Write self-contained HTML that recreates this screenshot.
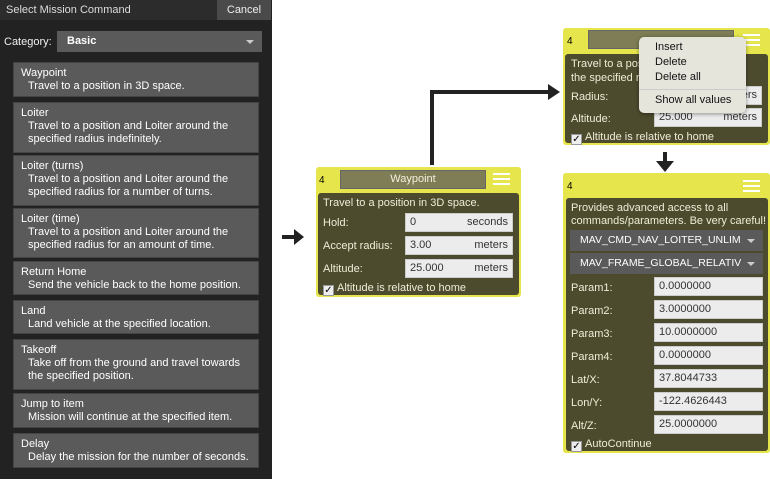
<!DOCTYPE html>
<html><head><style>
*{margin:0;padding:0;box-sizing:border-box}
body{width:770px;height:481px;background:#fff;position:relative;font-family:"Liberation Sans",sans-serif;font-size:11px;overflow:hidden}
.a{position:absolute}
.lp{left:0;top:0;width:272px;height:479px;background:#222}
.item{position:absolute;left:13px;width:246px;background:#5a5a5a;border:1px solid #444;color:#fff;padding:4px 0 0 7px;line-height:13px}
.item div{padding-left:7px}
.card{background:#e6e64c;border-radius:3px}
.in{background:#4c4b2e;border-radius:3px;color:#f2f2e0}
.fld{position:absolute;background:#ececec;border:1px solid #ccc;color:#333;height:19px;line-height:17px;padding:0 4px}
.fld span{float:right}
.lab{position:absolute;color:#eeeed8}
.ham{position:absolute;width:17px;height:2px;background:#fff;box-shadow:0 5px 0 #fff,0 10px 0 #fff}
.cb{display:inline-block;width:11px;height:11px;background:#eee;border:1px solid #999;vertical-align:-2px;margin-right:3px;font-size:10px;line-height:9px;color:#000;text-align:center}
.dd{position:absolute;background:#5a5a5a;color:#fff;height:21px;line-height:21px;padding-left:10px;white-space:nowrap}
.dd b{display:block;overflow:hidden;font-weight:normal;width:calc(100% - 22px)}
.dd:after{content:"";position:absolute;right:8px;top:9px;border:4px solid transparent;border-top-color:#ccc;border-bottom:0}
</style></head><body>
<div class="a lp"></div>
<div class="a" style="left:0;top:0;width:217px;height:20px;background:#2c2c2c;color:#ddd;line-height:20px;padding-left:6px">Select Mission Command</div>
<div class="a" style="left:217px;top:0;width:54px;height:20px;background:#4a4a4a;color:#eee;line-height:20px;text-align:center">Cancel</div>
<div class="a" style="left:4px;top:36px;color:#eee">Category:</div>
<div class="dd" style="left:57px;top:31px;width:205px;font-weight:bold">Basic</div>
<div class="item" style="top:62px;height:35px">Waypoint<div>Travel to a position in 3D space.</div></div>
<div class="item" style="top:102px;height:51px">Loiter<div>Travel to a position and Loiter around the<br>specified radius indefinitely.</div></div>
<div class="item" style="top:155px;height:51px">Loiter (turns)<div>Travel to a position and Loiter around the<br>specified radius for a number of turns.</div></div>
<div class="item" style="top:208px;height:50px">Loiter (time)<div>Travel to a position and Loiter around the<br>specified radius for an amount of time.</div></div>
<div class="item" style="top:261px;height:34px">Return Home<div>Send the vehicle back to the home position.</div></div>
<div class="item" style="top:300px;height:34px">Land<div>Land vehicle at the specified location.</div></div>
<div class="item" style="top:339px;height:51px">Takeoff<div>Take off from the ground and travel towards<br>the specified position.</div></div>
<div class="item" style="top:393px;height:35px">Jump to item<div>Mission will continue at the specified item.</div></div>
<div class="item" style="top:433px;height:35px">Delay<div>Delay the mission for the number of seconds.</div></div>

<svg class="a" style="left:0;top:0" width="770" height="481">
<g fill="#222">
<rect x="282" y="235" width="14" height="4"/><polygon points="294,229 304,237 294,245"/>
<rect x="430" y="90" width="4" height="75"/><rect x="430" y="90" width="120" height="4"/><polygon points="548,84 560,92 548,100"/>
<rect x="663" y="152" width="4" height="12"/><polygon points="656,161 665,172 674,161"/>
</g></svg>

<div class="a card" style="left:316px;top:167px;width:205px;height:130px"></div>
<div class="a" style="left:319px;top:175px;font-size:10px">4</div>
<div class="a" style="left:340px;top:170px;width:146px;height:19px;background:#7e7d55;border:1px solid #666;color:#f2f2e0;text-align:center;line-height:17px">Waypoint</div>
<div class="ham" style="left:493px;top:173px"></div>
<div class="a in" style="left:318px;top:193px;width:201px;height:102px"></div>
<div class="lab" style="left:323px;top:197px">Travel to a position in 3D space.</div>
<div class="lab" style="left:323px;top:217px">Hold:</div><div class="fld" style="left:405px;top:213px;width:108px">0<span>seconds</span></div>
<div class="lab" style="left:323px;top:240px">Accept radius:</div><div class="fld" style="left:405px;top:236px;width:108px">3.00<span>meters</span></div>
<div class="lab" style="left:323px;top:263px">Altitude:</div><div class="fld" style="left:405px;top:259px;width:108px">25.000<span>meters</span></div>
<div class="lab" style="left:323px;top:282px"><span class="cb">✓</span>Altitude is relative to home</div>

<div class="a card" style="left:563px;top:28px;width:207px;height:117px"></div>
<div class="a" style="left:567px;top:36px;font-size:10px">4</div>
<div class="a" style="left:588px;top:30px;width:146px;height:19px;background:#7e7d55;border:1px solid #666"></div>
<div class="ham" style="left:743px;top:34px"></div>
<div class="a in" style="left:565px;top:54px;width:203px;height:89px"></div>
<div class="lab" style="left:571px;top:57px;line-height:14px">Travel to a pos<br>the specified r</div>
<div class="lab" style="left:571px;top:91px">Radius:</div><div class="fld" style="left:654px;top:86px;width:108px"><span>ers</span></div>
<div class="lab" style="left:571px;top:113px">Altitude:</div><div class="fld" style="left:654px;top:108px;width:108px">25.000<span>meters</span></div>
<div class="lab" style="left:571px;top:131px"><span class="cb">✓</span>Altitude is relative to home</div>
<div class="a" style="left:639px;top:37px;width:107px;height:76px;background:#e6e5dc;border-radius:5px;box-shadow:0 1px 4px rgba(0,0,0,.4);color:#111;line-height:15px;padding:3px 0 0 16px">Insert<br>Delete<br>Delete all<div style="border-top:1px solid #ccc;margin:4px 0 3px -16px"></div>Show all values</div>

<div class="a card" style="left:563px;top:173px;width:207px;height:280px"></div>
<div class="a" style="left:567px;top:181px;font-size:10px">4</div>
<div class="ham" style="left:743px;top:180px"></div>
<div class="a in" style="left:566px;top:198px;width:202px;height:253px"></div>
<div class="lab" style="left:571px;top:202px;line-height:13px">Provides advanced access to all<br>commands/parameters. Be very careful!</div>
<div class="dd" style="left:570px;top:230px;width:193px;font-size:10.5px"><b>MAV_CMD_NAV_LOITER_UNLIM</b></div>
<div class="dd" style="left:570px;top:253px;width:193px;font-size:10.5px"><b>MAV_FRAME_GLOBAL_RELATIVE_...</b></div>
<div class="lab" style="left:571px;top:282px">Param1:</div><div class="fld" style="left:654px;top:277px;width:109px">0.0000000</div>
<div class="lab" style="left:571px;top:305px">Param2:</div><div class="fld" style="left:654px;top:300px;width:109px">3.0000000</div>
<div class="lab" style="left:571px;top:328px">Param3:</div><div class="fld" style="left:654px;top:323px;width:109px">10.0000000</div>
<div class="lab" style="left:571px;top:351px">Param4:</div><div class="fld" style="left:654px;top:346px;width:109px">0.0000000</div>
<div class="lab" style="left:571px;top:374px">Lat/X:</div><div class="fld" style="left:654px;top:369px;width:109px">37.8044733</div>
<div class="lab" style="left:571px;top:397px">Lon/Y:</div><div class="fld" style="left:654px;top:392px;width:109px">-122.4626443</div>
<div class="lab" style="left:571px;top:420px">Alt/Z:</div><div class="fld" style="left:654px;top:415px;width:109px">25.0000000</div>
<div class="lab" style="left:571px;top:438px"><span class="cb">✓</span>AutoContinue</div>
</body></html>
